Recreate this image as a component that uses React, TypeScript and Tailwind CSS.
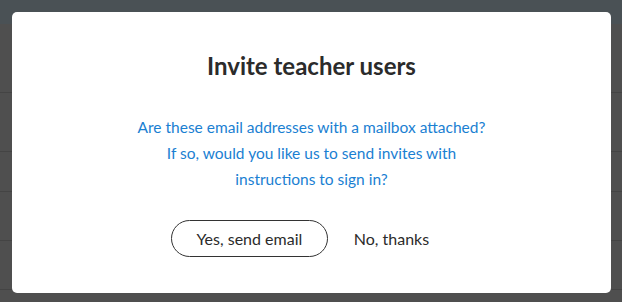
export default function App() {
  return (
    <div className="relative w-[622px] h-[302px] overflow-hidden bg-[#4f4f4f]" style={{ fontFamily: "Lato, 'Noto Sans', sans-serif" }}>
      <div className="h-6 bg-[#4a5155]" />
      <div className="flex flex-col">
        <div className="h-[69px] border-b border-[#444]" />
        <div className="h-[59px] border-b border-[#444]" />
        <div className="h-[40px] border-b border-[#444]" />
        <div className="h-[49px] border-b border-[#444]" />
        <div className="h-[49px] border-b border-[#444]" />
      </div>
      <div className="absolute left-[12px] top-[12px] w-[599px] h-[281px] bg-white rounded-[5px] flex flex-col items-center">
        <h2 className="mt-[38px] text-[24px] leading-[32px] font-bold text-[#2b2b2b]">Invite teacher users</h2>
        <p className="mt-[32px] text-[15.5px] leading-[26px] text-[#1a80d2] text-center">
          Are these email addresses with a mailbox attached?
          <br />
          If so, would you like us to send invites with
          <br />
          instructions to sign in?
        </p>
        <div className="mt-[28px] mr-[23px] flex items-center gap-[26px]">
          <button className="w-[157px] h-[37px] rounded-full border border-[#333] text-[16px] text-[#2b2b2b] bg-white">Yes, send email</button>
          <button className="text-[16px] text-[#2b2b2b]">No, thanks</button>
        </div>
      </div>
    </div>
  );
}
